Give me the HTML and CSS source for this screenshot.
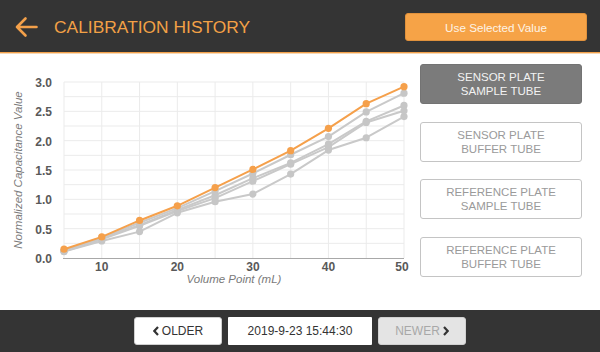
FILE: index.html
```html
<!DOCTYPE html>
<html>
<head>
<meta charset="utf-8">
<link rel="stylesheet" href="styles.css">
</head>
<body>
<div class="app">
  <header class="topbar">
    <svg class="back" width="24" height="22" viewBox="0 0 24 22">
      <path d="M22.5 11H3 M11.5 2.5L3 11l8.5 8.5" fill="none" stroke="#f3a04a" stroke-width="2.6" stroke-linecap="round" stroke-linejoin="round"/>
    </svg>
    <h1 class="title">CALIBRATION HISTORY</h1>
    <button class="use-btn">Use Selected Value</button>
  </header>

  <main class="content">
    <svg class="chart" width="412" height="257" viewBox="0 0 412 257">
      <g class="grid" stroke="#ebebeb" stroke-width="1">
        <line x1="64" y1="190.33" x2="404" y2="190.33"/>
        <line x1="64" y1="175.67" x2="404" y2="175.67"/>
        <line x1="64" y1="161" x2="404" y2="161"/>
        <line x1="64" y1="146.33" x2="404" y2="146.33"/>
        <line x1="64" y1="131.67" x2="404" y2="131.67"/>
        <line x1="64" y1="117" x2="404" y2="117"/>
        <line x1="64" y1="102.33" x2="404" y2="102.33"/>
        <line x1="64" y1="87.67" x2="404" y2="87.67"/>
        <line x1="64" y1="73" x2="404" y2="73"/>
        <line x1="64" y1="58.33" x2="404" y2="58.33"/>
        <line x1="64" y1="43.67" x2="404" y2="43.67"/>
        <line x1="64" y1="29" x2="404" y2="29"/>
        <line x1="64" y1="29" x2="64" y2="205"/>
        <line x1="101.78" y1="29" x2="101.78" y2="205"/>
        <line x1="139.56" y1="29" x2="139.56" y2="205"/>
        <line x1="177.33" y1="29" x2="177.33" y2="205"/>
        <line x1="215.11" y1="29" x2="215.11" y2="205"/>
        <line x1="252.89" y1="29" x2="252.89" y2="205"/>
        <line x1="290.67" y1="29" x2="290.67" y2="205"/>
        <line x1="328.44" y1="29" x2="328.44" y2="205"/>
        <line x1="366.22" y1="29" x2="366.22" y2="205"/>
        <line x1="404" y1="29" x2="404" y2="205"/>
      </g>
      <line x1="63" y1="205.5" x2="404" y2="205.5" stroke="#a8a8a8" stroke-width="1"/>

      <g class="ylabels">
        <text x="52" y="210">0.0</text>
        <text x="52" y="180.67">0.5</text>
        <text x="52" y="151.33">1.0</text>
        <text x="52" y="122">1.5</text>
        <text x="52" y="92.67">2.0</text>
        <text x="52" y="63.33">2.5</text>
        <text x="52" y="34">3.0</text>
      </g>
      <g class="xlabels">
        <text x="101.78" y="217.5">10</text>
        <text x="177.33" y="217.5">20</text>
        <text x="252.89" y="217.5">30</text>
        <text x="328.44" y="217.5">40</text>
        <text x="402" y="217.5">50</text>
      </g>
      <text class="axis-title" x="234" y="229.5">Volume Point (mL)</text>
      <text class="axis-title" x="22" y="117" transform="rotate(-90 22 117)">Normalized Capacitance Value</text>

      <g class="series gray">
        <polyline points="64,198.55 101.78,187.99 139.56,178.6 177.33,159.83 215.11,148.68 252.89,141.05 290.67,121.11 328.44,97.05 366.22,84.73 404,63.61"/>
        <polyline points="64,198.55 101.78,186.23 139.56,172.73 177.33,158.07 215.11,145.16 252.89,128.15 290.67,111.13 328.44,94.12 366.22,69.49 404,57.75"/>
        <polyline points="64,197.96 101.78,185.05 139.56,172.15 177.33,156.89 215.11,142.23 252.89,125.21 290.67,109.96 328.44,91.19 366.22,68.31 404,52.47"/>
        <polyline points="64,197.37 101.78,184.47 139.56,169.8 177.33,155.13 215.11,138.12 252.89,120.52 290.67,101.75 328.44,83.56 366.22,58.92 404,40.15"/>
        <circle cx="64" cy="198.55" r="3.6"/><circle cx="101.78" cy="187.99" r="3.6"/><circle cx="139.56" cy="178.6" r="3.6"/><circle cx="177.33" cy="159.83" r="3.6"/><circle cx="215.11" cy="148.68" r="3.6"/><circle cx="252.89" cy="141.05" r="3.6"/><circle cx="290.67" cy="121.11" r="3.6"/><circle cx="328.44" cy="97.05" r="3.6"/><circle cx="366.22" cy="84.73" r="3.6"/><circle cx="404" cy="63.61" r="3.6"/>
        <circle cx="64" cy="198.55" r="3.6"/><circle cx="101.78" cy="186.23" r="3.6"/><circle cx="139.56" cy="172.73" r="3.6"/><circle cx="177.33" cy="158.07" r="3.6"/><circle cx="215.11" cy="145.16" r="3.6"/><circle cx="252.89" cy="128.15" r="3.6"/><circle cx="290.67" cy="111.13" r="3.6"/><circle cx="328.44" cy="94.12" r="3.6"/><circle cx="366.22" cy="69.49" r="3.6"/><circle cx="404" cy="57.75" r="3.6"/>
        <circle cx="64" cy="197.96" r="3.6"/><circle cx="101.78" cy="185.05" r="3.6"/><circle cx="139.56" cy="172.15" r="3.6"/><circle cx="177.33" cy="156.89" r="3.6"/><circle cx="215.11" cy="142.23" r="3.6"/><circle cx="252.89" cy="125.21" r="3.6"/><circle cx="290.67" cy="109.96" r="3.6"/><circle cx="328.44" cy="91.19" r="3.6"/><circle cx="366.22" cy="68.31" r="3.6"/><circle cx="404" cy="52.47" r="3.6"/>
        <circle cx="64" cy="197.37" r="3.6"/><circle cx="101.78" cy="184.47" r="3.6"/><circle cx="139.56" cy="169.8" r="3.6"/><circle cx="177.33" cy="155.13" r="3.6"/><circle cx="215.11" cy="138.12" r="3.6"/><circle cx="252.89" cy="120.52" r="3.6"/><circle cx="290.67" cy="101.75" r="3.6"/><circle cx="328.44" cy="83.56" r="3.6"/><circle cx="366.22" cy="58.92" r="3.6"/><circle cx="404" cy="40.15" r="3.6"/>
      </g>
      <g class="series orange">
        <polyline points="64,196.2 101.78,183.88 139.56,167.45 177.33,152.79 215.11,134.6 252.89,116.41 290.67,97.64 328.44,75.35 366.22,50.71 404,33.69"/>
        <circle cx="64" cy="196.2" r="3.6"/><circle cx="101.78" cy="183.88" r="3.6"/><circle cx="139.56" cy="167.45" r="3.6"/><circle cx="177.33" cy="152.79" r="3.6"/><circle cx="215.11" cy="134.6" r="3.6"/><circle cx="252.89" cy="116.41" r="3.6"/><circle cx="290.67" cy="97.64" r="3.6"/><circle cx="328.44" cy="75.35" r="3.6"/><circle cx="366.22" cy="50.71" r="3.6"/><circle cx="404" cy="33.69" r="3.6"/>
      </g>
    </svg>

    <nav class="sources">
      <button class="source selected">SENSOR PLATE<br>SAMPLE TUBE</button>
      <button class="source">SENSOR PLATE<br>BUFFER TUBE</button>
      <button class="source">REFERENCE PLATE<br>SAMPLE TUBE</button>
      <button class="source">REFERENCE PLATE<br>BUFFER TUBE</button>
    </nav>
  </main>

  <footer class="bottombar">
    <button class="nav-btn older">
      <svg class="chev" width="6" height="10" viewBox="0 0 6 10"><path d="M5 1L1.3 5 5 9" fill="none" stroke="#333" stroke-width="2.2" stroke-linejoin="miter"/></svg>
      <span>OLDER</span>
    </button>
    <div class="date">2019-9-23 15:44:30</div>
    <button class="nav-btn newer">
      <span>NEWER</span>
      <svg class="chev" width="6" height="10" viewBox="0 0 6 10"><path d="M1 1l3.7 4L1 9" fill="none" stroke="#333" stroke-width="2.2" stroke-linejoin="miter"/></svg>
    </button>
  </footer>
</div>
</body>
</html>
```
FILE: styles.css
```css
* { box-sizing: border-box; }
html, body {
  margin: 0;
  padding: 0;
  width: 600px;
  height: 352px;
  overflow: hidden;
  background: #ffffff;
  font-family: "Liberation Sans", Arial, sans-serif;
}
.app {
  width: 600px;
  height: 352px;
  display: flex;
  flex-direction: column;
}
.topbar {
  height: 53px;
  flex: none;
  background: #343434;
  border-bottom: 1.5px solid #f2a04a;
  box-shadow: 0 1px 0 #f7d8b4;
  display: flex;
  align-items: center;
  padding: 2px 13px 0 14px;
}
.back {
  flex: none;
  margin-right: 16px;
}
.title {
  flex: 1;
  margin: 0;
  font-weight: normal;
  font-size: 17.4px;
  color: #f2a146;
  letter-spacing: 0;
}
.use-btn {
  width: 182px;
  height: 28px;
  background: #f6a347;
  border: 1px solid #e0913c;
  border-radius: 3px;
  color: #fdf3e6;
  font-family: "Liberation Sans", Arial, sans-serif;
  font-size: 11.7px;
  padding: 0;
}
.content {
  flex: none;
  height: 257px;
  display: flex;
}
.chart {
  flex: none;
  display: block;
}
.ylabels text {
  text-anchor: end;
  font-size: 12px;
  font-weight: bold;
  fill: #595959;
}
.xlabels text {
  text-anchor: middle;
  font-size: 12px;
  font-weight: bold;
  fill: #595959;
}
.axis-title {
  text-anchor: middle;
  font-size: 11.5px;
  font-style: italic;
  fill: #7a7a7a;
}
.series polyline {
  fill: none;
  stroke-width: 2;
  stroke-linejoin: round;
}
.series.gray polyline { stroke: #c9c9c9; }
.series.gray circle { fill: #c6c6c6; }
.series.orange polyline { stroke: #f5a04b; }
.series.orange circle { fill: #f5a04b; }
.sources {
  margin-left: 8px;
  padding-top: 11px;
  display: flex;
  flex-direction: column;
  gap: 17.7px;
}
.source {
  width: 162px;
  height: 40px;
  background: #ffffff;
  border: 1px solid #c4c4c4;
  border-radius: 3px;
  color: #9a9a9a;
  font-family: "Liberation Sans", Arial, sans-serif;
  font-size: 11.5px;
  line-height: 14px;
  padding: 0;
}
.source.selected {
  background: #7b7b7b;
  border-color: #737373;
  color: #f2f2f2;
}
.bottombar {
  flex: 1;
  background: #343434;
  display: flex;
  align-items: center;
  justify-content: center;
  gap: 6px;
}
.nav-btn {
  width: 88px;
  height: 28px;
  border: 1px solid #d0d0d0;
  border-radius: 3px;
  background: #ffffff;
  color: #333333;
  font-family: "Liberation Sans", Arial, sans-serif;
  font-size: 12px;
  display: flex;
  align-items: center;
  justify-content: center;
  gap: 3px;
  padding: 0;
}
.nav-btn.newer {
  background: #e4e4e4;
  color: #a8a8a8;
}
.chev { display: block; }
.date {
  width: 144px;
  height: 28px;
  background: #ffffff;
  color: #333333;
  font-size: 12px;
  display: flex;
  align-items: center;
  justify-content: center;
  border-radius: 1px;
}
```
